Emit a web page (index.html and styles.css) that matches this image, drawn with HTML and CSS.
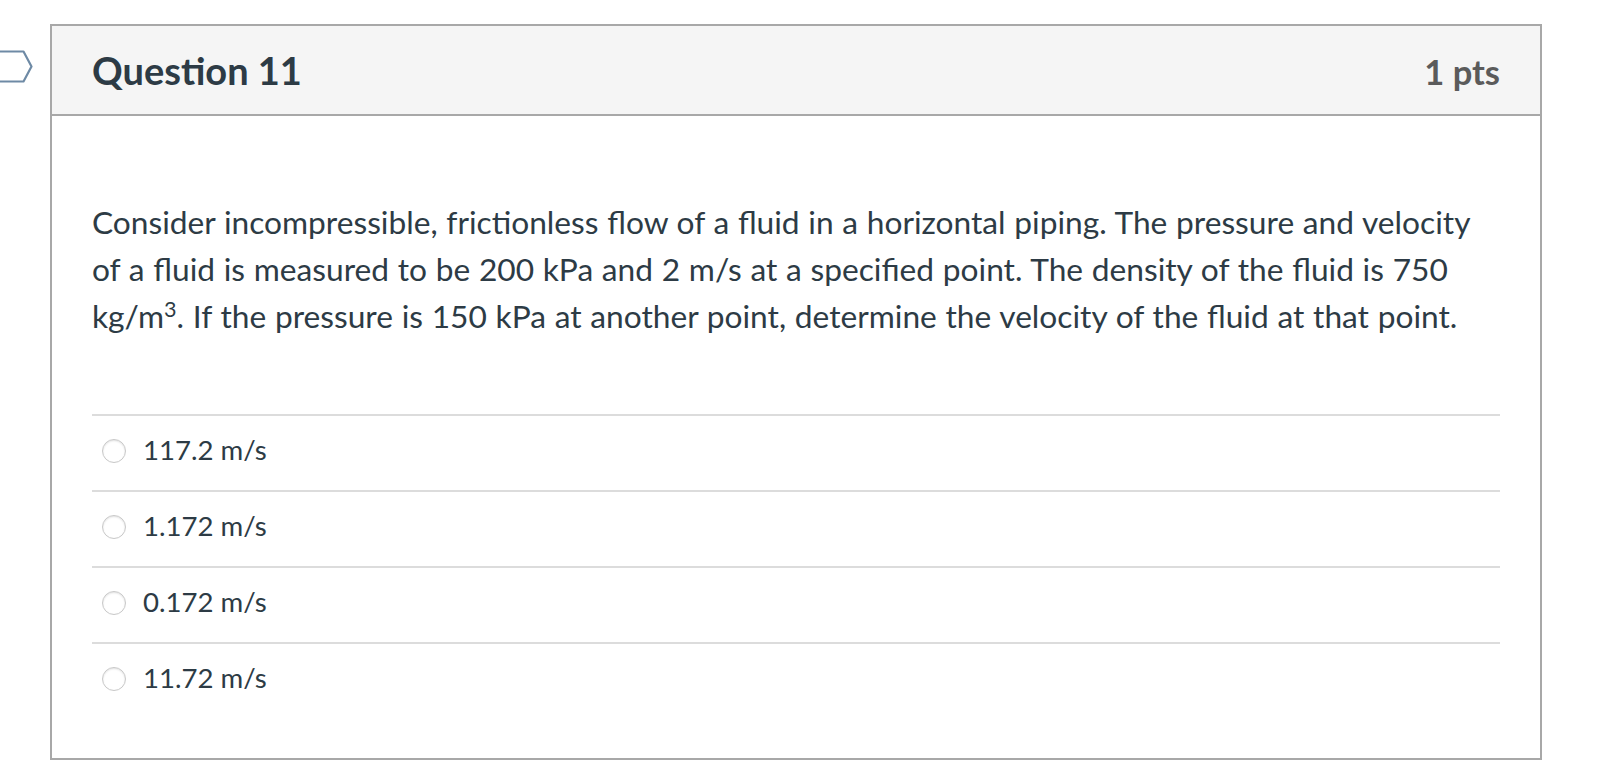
FILE: index.html
```html
<!DOCTYPE html>
<html lang="en">
<head>
<meta charset="utf-8">
<title>Question 11</title>
<link rel="stylesheet" href="styles.css">
</head>
<body>
<div class="page">
  <div class="marker">
    <svg width="34" height="34" viewBox="0 0 34 34" aria-hidden="true">
      <path d="M-2 1.5 H23.5 L31.5 16.5 L23.5 31.5 H-2" fill="#fff" stroke="#6e8aa5" stroke-width="2.2" stroke-linejoin="round"/>
    </svg>
  </div>
  <div class="card">
    <div class="card-header">
      <h2 class="title">Question 11</h2>
      <span class="pts">1 pts</span>
    </div>
    <div class="card-body">
      <p class="question">Consider incompressible, frictionless flow of a fluid in a horizontal piping. The pressure and velocity of a fluid is measured to be 200 kPa and 2 m/s at a specified point. The density of the fluid is 750 kg/m<sup>3</sup>. If the pressure is 150 kPa at another point, determine the velocity of the fluid at that point.</p>
      <div class="answers">
        <label class="answer"><span class="radio"></span><span class="answer-text">117.2 m/s</span></label>
        <label class="answer"><span class="radio"></span><span class="answer-text">1.172 m/s</span></label>
        <label class="answer"><span class="radio"></span><span class="answer-text">0.172 m/s</span></label>
        <label class="answer"><span class="radio"></span><span class="answer-text">11.72 m/s</span></label>
      </div>
    </div>
  </div>
</div>
</body>
</html>
```
FILE: styles.css
```css
* { box-sizing: border-box; }
html, body { margin: 0; padding: 0; background: #fff; }
body {
  font-family: Lato, "Liberation Sans", sans-serif;
  color: #2d3b45;
}
.page {
  position: relative;
  padding: 24px 0 0 50px;
  width: 1606px;
}
.marker {
  position: absolute;
  left: 0;
  top: 50px;
  width: 34px;
  height: 34px;
}
.marker svg { display: block; }
.card {
  width: 1492px;
  border: 2px solid #a8a8a8;
}
.card-header {
  display: flex;
  align-items: center;
  justify-content: space-between;
  height: 90px;
  padding: 0 40px;
  background: #f5f5f5;
  border-bottom: 2px solid #a8a8a8;
}
.title {
  margin: 0;
  font-size: 38px;
  font-weight: 700;
  color: #2d3b45;
}
.pts {
  font-size: 34.5px;
  font-weight: 700;
  color: #5b5b5b;
  padding-top: 2px;
}
.card-body {
  padding: 83px 40px 40px 40px;
}
.question {
  margin: 0 0 74px 0;
  max-width: 1388px;
  font-size: 31.7px;
  line-height: 47px;
  word-spacing: 0.6px;
}
.question sup {
  font-size: 0.68em;
  line-height: 1;
  vertical-align: 0.5em;
}
.answers { display: flex; flex-direction: column; }
.answer {
  display: flex;
  align-items: center;
  height: 76px;
  border-top: 2px solid #dcdcdc;
  padding-left: 10px;
  padding-bottom: 8px;
  font-size: 27.6px;
}
.radio {
  width: 24px;
  height: 24px;
  border-radius: 50%;
  border: 1px solid #c8c8c8;
  background: #fff;
  box-shadow: inset 0 1px 2px rgba(0,0,0,0.12);
  margin-right: 17px;
  margin-top: 4px;
  flex: none;
}
.answer-text { color: #2d3b45; }
```
